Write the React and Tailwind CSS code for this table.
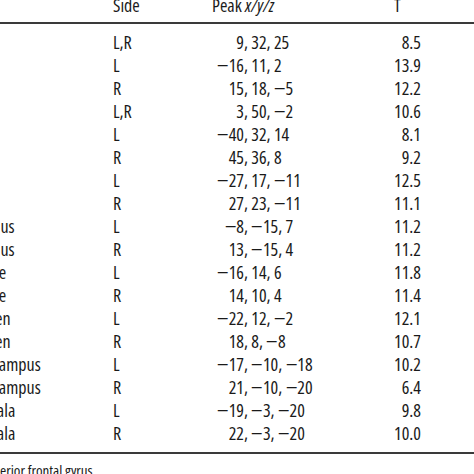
const rows = [
  ['SFG', 'L,R', '9', ', 32, 25', '8.5'],
  ['IFG', 'L', '−16', ', 11, 2', '13.9'],
  ['IFG', 'R', '15', ', 18, −5', '12.2'],
  ['ACC', 'L,R', '3', ', 50, −2', '10.6'],
  ['MFG', 'L', '−40', ', 32, 14', '8.1'],
  ['MFG', 'R', '45', ', 36, 8', '9.2'],
  ['OFC', 'L', '−27', ', 17, −11', '12.5'],
  ['OFC', 'R', '27', ', 23, −11', '11.1'],
  ['Thalamus', 'L', '−8', ', −15, 7', '11.2'],
  ['Thalamus', 'R', '13', ', −15, 4', '11.2'],
  ['Caudate', 'L', '−16', ', 14, 6', '11.8'],
  ['Caudate', 'R', '14', ', 10, 4', '11.4'],
  ['Putamen', 'L', '−22', ', 12, −2', '12.1'],
  ['Putamen', 'R', '18', ', 8, −8', '10.7'],
  ['Hippocampus', 'L', '−17', ', −10, −18', '10.2'],
  ['Hippocampus', 'R', '21', ', −10, −20', '6.4'],
  ['Amygdala', 'L', '−19', ', −3, −20', '9.8'],
  ['Amygdala', 'R', '22', ', −3, −20', '10.0'],
];

function Num({ text }) {
  const parts = text.split('−');
  return (
    <>
      {parts.map((p, i) => (
        <span key={i}>
          {i > 0 && <span className="inline-block scale-x-150 mx-[2px]">−</span>}
          {p}
        </span>
      ))}
    </>
  );
}

export default function App() {
  return (
    <div className="w-[474px] h-[474px] overflow-hidden bg-white text-[#1a1a1a] font-['Open_Sans',sans-serif] font-stretch-condensed font-medium text-[18px]">
      <div className="grid grid-cols-[113px_87px_44px_136px_41px] leading-[23px] -mt-[6px]">
        <div></div>
        <div>Side</div>
        <div className="col-span-2 pl-[12px] whitespace-nowrap">
          Peak <span className="italic">x/y/z</span>
        </div>
        <div className="pl-[14px]">T</div>
      </div>
      <div className="mt-[5px] border-t-2 border-[#3a3a3a] pt-[7px] pb-[7px] border-b-2">
        {rows.map((r, i) => (
          <div key={i} className="grid grid-cols-[113px_87px_44px_136px_41px] leading-[23px] whitespace-nowrap">
            <div className="-ml-[45px]">{r[0]}</div>
            <div>{r[1]}</div>
            <div className="text-right"><Num text={r[2]} /></div>
            <div><Num text={r[3]} /></div>
            <div className="text-right">{r[4]}</div>
          </div>
        ))}
      </div>
      <div className="mt-[8px] text-[15px] leading-[16px] whitespace-nowrap">
        <span className="inline-block w-[80px] -ml-[80px] text-right">SFG, sup</span>erior frontal gyrus.
      </div>
    </div>
  );
}
